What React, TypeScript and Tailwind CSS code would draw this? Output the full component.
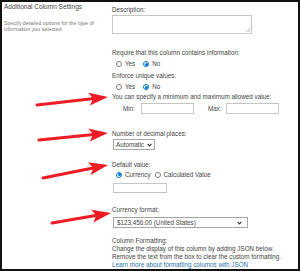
import React from 'react';

const font = { fontFamily: '"Liberation Sans", Arial, sans-serif' };

const Radio = ({ checked }: { checked?: boolean }) =>
  checked ? (
    <span className="block w-[6px] h-[6px] rounded-full border border-[#0078d4] flex items-center justify-center shrink-0">
      <span className="block w-[3px] h-[3px] rounded-full bg-[#0078d4]" />
    </span>
  ) : (
    <span className="block w-[6px] h-[6px] rounded-full border border-[#808080] bg-white shrink-0" />
  );

const Chevron = () => (
  <svg width="5" height="4" viewBox="0 0 5 4" className="shrink-0">
    <path d="M0.6 0.8 L2.5 2.9 L4.4 0.8" fill="none" stroke="#333" strokeWidth="1.1" />
  </svg>
);

// red annotation arrows drawn over the form
const arrows = [
  { x1: 37, y1: 105, x2: 108, y2: 97 },
  { x1: 39, y1: 140, x2: 108, y2: 133 },
  { x1: 43, y1: 178, x2: 108, y2: 165 },
  { x1: 52, y1: 223, x2: 111, y2: 213 },
];

const Arrow = ({ x1, y1, x2, y2 }: { x1: number; y1: number; x2: number; y2: number }) => {
  const dx = x2 - x1;
  const dy = y2 - y1;
  const len = Math.hypot(dx, dy);
  const ux = dx / len;
  const uy = dy / len;
  const head = 19;
  const half = 6.5;
  const bx = x2 - ux * head;
  const by = y2 - uy * head;
  const pts = `${x2},${y2} ${bx - uy * half},${by + ux * half} ${bx + ux * 4},${by + uy * 4} ${bx + uy * half},${by - ux * half}`;
  return (
    <g>
      <line x1={x1} y1={y1} x2={bx + ux * 5} y2={by + uy * 5} stroke="#ee1c24" strokeWidth="3" strokeLinecap="round" />
      <polygon points={pts} fill="#ee1c24" />
    </g>
  );
};

export default function App() {
  return (
    <div className="relative w-[300px] h-[271px] border-2 border-[#111] bg-white overflow-hidden flex text-[#444]" style={font}>
      {/* Left description column */}
      <div className="w-[110px] pl-[2px] pt-[1px] shrink-0">
        <p className="text-[6.5px] leading-[8px] text-[#444]">Additional Column Settings</p>
        <p className="mt-[9px] text-[5.3px] leading-[6px] text-[#777]">
          Specify detailed options for the type of information you selected.
        </p>
      </div>

      {/* Right form column */}
      <div className="flex-1 flex flex-col items-start pt-[4px] text-[6.3px] leading-[8px]">
        <p>Description:</p>
        <div className="relative mt-[1px] w-[140px] h-[20px] border border-[#c6c6c6]">
          <svg width="4" height="4" viewBox="0 0 4 4" className="absolute right-[1px] bottom-[1px]">
            <path d="M0 4 L4 0 M2 4 L4 2" stroke="#999" strokeWidth="0.6" />
          </svg>
        </div>

        <p className="mt-[15px]">Require that this column contains information:</p>
        <div className="mt-[3px] ml-[4px] flex items-center h-[8px]">
          <Radio />
          <span className="ml-[3px]">Yes</span>
          <span className="ml-[8px]"><Radio checked /></span>
          <span className="ml-[3px]">No</span>
        </div>

        <p className="mt-[4px]">Enforce unique values:</p>
        <div className="mt-[3px] ml-[4px] flex items-center h-[8px]">
          <Radio />
          <span className="ml-[3px]">Yes</span>
          <span className="ml-[8px]"><Radio checked /></span>
          <span className="ml-[3px]">No</span>
        </div>

        <p className="mt-[2px]">You can specify a minimum and maximum allowed value:</p>
        <div className="mt-[2px] flex items-center">
          <span className="ml-[11px] w-[18px]">Min:</span>
          <span className="w-[53px] h-[11px] border border-[#c6c6c6]" />
          <span className="ml-[14px] w-[18px]">Max:</span>
          <span className="w-[53px] h-[11px] border border-[#c6c6c6]" />
        </div>

        <p className="mt-[16px]">Number of decimal places:</p>
        <div className="mt-[1px] ml-[1px] w-[42px] h-[11px] border border-[#a6a6a6] flex items-center justify-between pl-[2px] pr-[2px]">
          <span>Automatic</span>
          <Chevron />
        </div>

        <p className="mt-[11px]">Default value:</p>
        <div className="mt-[2px] ml-[4px] flex items-center h-[8px]">
          <Radio checked />
          <span className="ml-[3px]">Currency</span>
          <span className="ml-[4px]"><Radio /></span>
          <span className="ml-[3px]">Calculated Value</span>
        </div>
        <span className="mt-[4px] ml-[1px] w-[54px] h-[11px] border border-[#c6c6c6]" />

        <p className="mt-[13px]">Currency format:</p>
        <div className="mt-[3px] ml-[1px] w-[135px] h-[11px] border border-[#a6a6a6] flex items-center justify-between pl-[3px] pr-[5px]">
          <span>$123,456.00 (United States)</span>
          <Chevron />
        </div>

        <p className="mt-[9px]">Column Formatting:</p>
        <p>Change the display of this column by adding JSON below.</p>
        <p>Remove the text from the box to clear the custom formatting.</p>
        <p className="text-[#1f73a8]">Learn more about formatting columns with JSON</p>
      </div>

      <svg className="absolute -left-[2px] -top-[2px] pointer-events-none" width="300" height="271" viewBox="0 0 300 271">
        {arrows.map((a, i) => (
          <Arrow key={i} {...a} />
        ))}
      </svg>
    </div>
  );
}
